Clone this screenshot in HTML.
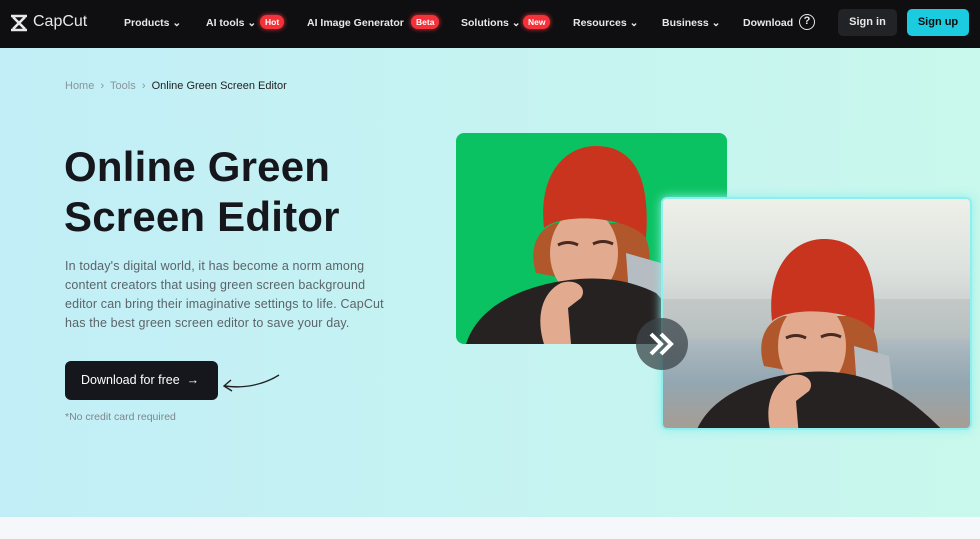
<!DOCTYPE html>
<html><head><meta charset="utf-8"><style>
*{margin:0;padding:0;box-sizing:border-box}
body{width:980px;height:539px;overflow:hidden;font-family:"Liberation Sans",sans-serif;background:linear-gradient(90deg,#c2eef7 0%,#c6f4f1 60%,#c9f8ec 100%);position:relative}
.nav{position:absolute;left:0;top:0;width:980px;height:48px;background:#0f0f11;color:#e8e8e8;font-size:10.5px;font-weight:bold}
.nav span{position:absolute;top:17px}
.badge{position:absolute;top:15px;background:#f5323a;color:#fff;font-size:8.5px;border-radius:8px;padding:2px 5px;box-shadow:0 0 5px #f5323a}
.btn{position:absolute;top:9px;height:27px;border-radius:5px;font-size:11px;font-weight:bold;text-align:center;line-height:27px}
.crumb{position:absolute;top:80px;left:65px;font-size:11px;color:#8a9599}
h1{position:absolute;left:64px;top:142px;font-size:42px;line-height:50px;color:#16171c;font-weight:bold;letter-spacing:0.2px}
p.d{position:absolute;left:65px;top:257px;width:325px;font-size:12.5px;line-height:19px;color:#5b6468;letter-spacing:0.15px}
.dl{position:absolute;left:65px;top:361px;width:153px;height:39px;background:#16171c;border-radius:6px;color:#fff;font-size:12.5px;line-height:39px;padding-left:16px}
.nc{position:absolute;left:65px;top:411px;font-size:10.5px;color:#7d878b}
.bottom{position:absolute;left:0;top:517px;width:980px;height:22px;background:#f5f7fa}
.card1{position:absolute;left:456px;top:133px;width:271px;height:211px;border-radius:8px;background:#0bc262;overflow:hidden}
.card2{position:absolute;left:661px;top:197px;width:311px;height:233px;border-radius:6px;overflow:hidden;border:2px solid #8ef0ee;box-shadow:0 0 10px #8ef0ee;background:linear-gradient(180deg,#eef0e8 0%,#dde2de 30%,#c9cfcf 50%,#a9b6bd 65%,#93a7b2 80%,#a69d94 100%)}
.arr{position:absolute;left:636px;top:318px;width:52px;height:52px;border-radius:50%;background:rgba(60,70,75,.75)}
</style></head><body>
<div class="nav">
 <svg style="position:absolute;left:9px;top:14px" width="20" height="18" viewBox="0 0 20 18"><path d="M2 2h16M2 16h16M4 3l12 12M16 3L4 15" stroke="#e8e8e8" stroke-width="2.6" fill="none"/></svg>
 <span style="left:33px;top:13px;font-size:16px;font-weight:normal">CapCut</span>
 <span style="left:124px">Products ⌄</span>
 <span style="left:206px">AI tools ⌄</span><div class="badge" style="left:260px">Hot</div>
 <span style="left:307px">AI Image Generator</span><div class="badge" style="left:411px">Beta</div>
 <span style="left:461px">Solutions ⌄</span><div class="badge" style="left:523px">New</div>
 <span style="left:573px">Resources ⌄</span>
 <span style="left:662px">Business ⌄</span>
 <span style="left:743px">Download</span>
 <div style="position:absolute;left:799px;top:14px;width:16px;height:16px;border:1.5px solid #e8e8e8;border-radius:50%;font-size:11px;text-align:center;line-height:13px">?</div>
 <div class="btn" style="left:838px;width:59px;background:#222327">Sign in</div>
 <div class="btn" style="left:907px;width:62px;background:#1bcbe0;color:#0a0a0a">Sign up</div>
</div>
<div class="crumb">Home &nbsp;›&nbsp; Tools &nbsp;›&nbsp; <b style="color:#222;font-weight:normal">Online Green Screen Editor</b></div>
<h1>Online Green<br>Screen Editor</h1>
<p class="d">In today's digital world, it has become a norm among content creators that using green screen background editor can bring their imaginative settings to life. CapCut has the best green screen editor to save your day.</p>
<div class="dl">Download for free &nbsp;→</div>
<svg style="position:absolute;left:220px;top:372px" width="62" height="24" viewBox="0 0 62 24"><path d="M59 3C45 12 25 17 5 14M11 8L4 14L12 19" stroke="#222" stroke-width="1.4" fill="none"/></svg>
<div class="nc">*No credit card required</div>

<div class="card1"><svg width="271" height="211" viewBox="0 0 271 211"><g>
<path d="M80 140C72 115 82 95 100 90L180 90C195 105 198 130 188 160Z" fill="#b0582c"/>
<path d="M170 120L205 130L212 190L175 190Z" fill="#b5bcc2"/>
<ellipse cx="128" cy="120" rx="34" ry="44" fill="#e2aa8f"/>
<path d="M102 112q10-5 20 0M137 111q10-5 20 0" stroke="#4a2a20" stroke-width="3" fill="none"/>
<path d="M112 150q12-4 22 0q-10 6-22 0Z" fill="#8e2f2c"/>
<path d="M88 95C82 40 110 13 140 13C175 13 195 40 190 105C175 85 110 78 88 95Z" fill="#c9341f"/>
<path d="M10 211C20 180 50 160 95 150C120 145 160 140 200 160C215 175 225 200 225 211Z" fill="#272222"/>
<path d="M88 211C80 185 85 160 105 150C120 145 132 155 125 165L112 175L115 211Z" fill="#e2aa8f"/>
</g></svg></div>
<div class="card2"><svg width="311" height="233" viewBox="0 0 311 233">
<rect x="0" y="100" width="311" height="40" fill="#b9bfbe" opacity=".6"/>
<g transform="translate(21,27)">
<path d="M80 140C72 115 82 95 100 90L180 90C195 105 198 130 188 160Z" fill="#b0582c"/>
<path d="M170 120L205 130L212 190L175 190Z" fill="#b5bcc2"/>
<ellipse cx="128" cy="120" rx="34" ry="44" fill="#e2aa8f"/>
<path d="M102 112q10-5 20 0M137 111q10-5 20 0" stroke="#4a2a20" stroke-width="3" fill="none"/>
<path d="M112 150q12-4 22 0q-10 6-22 0Z" fill="#8e2f2c"/>
<path d="M88 95C82 40 110 13 140 13C175 13 195 40 190 105C175 85 110 78 88 95Z" fill="#c9341f"/>
<path d="M10 211C20 180 50 160 95 150C120 145 160 140 200 160C225 170 255 200 265 211Z" fill="#272222"/>
<path d="M88 211C80 185 85 160 105 150C120 145 132 155 125 165L112 175L115 211Z" fill="#e2aa8f"/>
</g></svg></div>
<div class="arr"><svg width="52" height="52" viewBox="0 0 52 52"><path d="M15 16l10 10l-10 10M25 16l10 10l-10 10" stroke="#fff" stroke-width="4" fill="none"/></svg></div>
<div class="bottom"></div>
</body></html>
